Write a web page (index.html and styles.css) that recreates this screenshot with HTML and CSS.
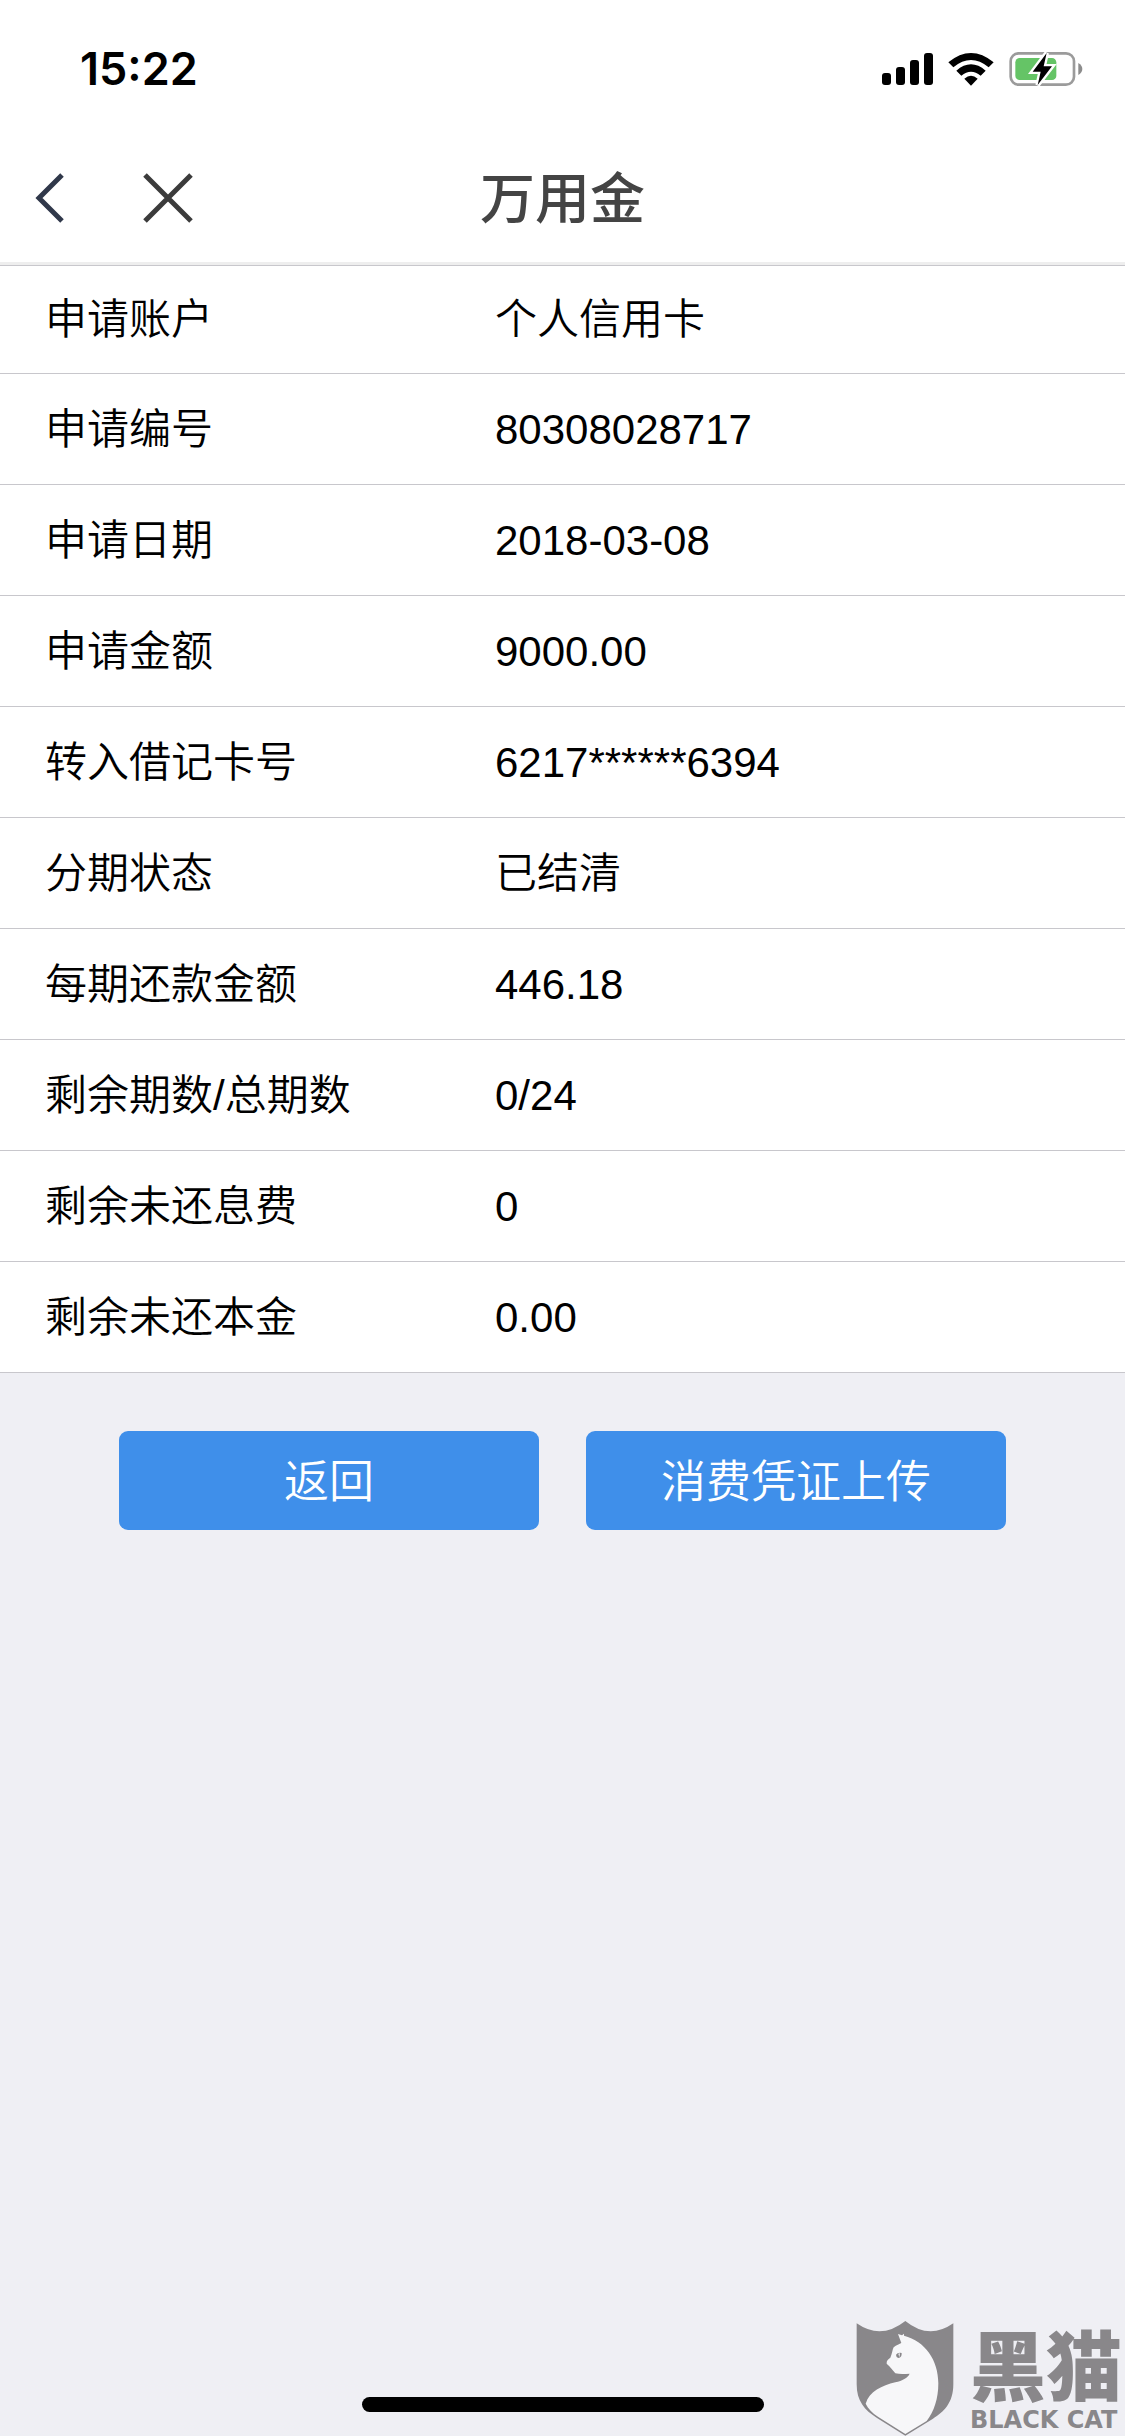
FILE: index.html
```html
<!DOCTYPE html>
<html lang="zh-CN">
<head>
<meta charset="utf-8">
<meta name="viewport" content="width=device-width, initial-scale=1">
<title>万用金</title>
<link rel="stylesheet" href="styles.css">
</head>
<body>
<div class="page">
  <div class="status-bar">
    <time class="clock">15:22</time>
    <div class="status-icons">
      <svg class="signal" viewBox="0 0 51 32" aria-hidden="true">
        <rect x="0" y="20" width="9" height="12" rx="3"/>
        <rect x="14" y="14" width="9" height="18" rx="3"/>
        <rect x="28" y="7" width="9" height="25" rx="3"/>
        <rect x="42" y="0" width="9" height="32" rx="3"/>
      </svg>
      <svg class="wifi" viewBox="0 0 138 99" aria-hidden="true">
        <path d="M1 28Q69-28 137 28L122 43Q69-1 16 43Z"/>
        <path d="M25 53Q69 15 113 53L98 68Q69 44 40 68Z"/>
        <path d="M49 77Q69 60 89 77L69 98Z"/>
      </svg>
      <svg class="battery" viewBox="0 0 220 102" aria-hidden="true">
        <rect x="4" y="4" width="190" height="94" rx="24" fill="none" stroke="#9b9b9b" stroke-width="8"/>
        <path d="M207 33Q219 40 219 51T207 69Z" fill="#8c8c8c"/>
        <rect x="18" y="18" width="123" height="66" rx="13" fill="#65c466"/>
        <path d="M112 3 70 59H94L85 99 128 43H103Z" fill="#000" stroke="#fff" stroke-width="14" paint-order="stroke"/>
      </svg>
    </div>
  </div>

  <header class="nav">
    <div class="nav-actions">
      <button class="icon-button" type="button" aria-label="返回上一页">
        <svg class="chevron" viewBox="0 0 30 50"><path d="M27 2 4 25 27 48" fill="none" stroke="#30384a" stroke-width="5"/></svg>
      </button>
      <button class="icon-button" type="button" aria-label="关闭">
        <svg class="cross" viewBox="0 0 50 50"><path d="M2 2 48 48M48 2 2 48" fill="none" stroke="#3b3b3b" stroke-width="5"/></svg>
      </button>
    </div>
    <h1 class="title">万用金</h1>
  </header>

  <main>
    <dl class="details">
      <div class="row"><dt>申请账户</dt><dd>个人信用卡</dd></div>
      <div class="row"><dt>申请编号</dt><dd>80308028717</dd></div>
      <div class="row"><dt>申请日期</dt><dd>2018-03-08</dd></div>
      <div class="row"><dt>申请金额</dt><dd>9000.00</dd></div>
      <div class="row"><dt>转入借记卡号</dt><dd>6217******6394</dd></div>
      <div class="row"><dt>分期状态</dt><dd>已结清</dd></div>
      <div class="row"><dt>每期还款金额</dt><dd>446.18</dd></div>
      <div class="row"><dt>剩余期数/总期数</dt><dd>0/24</dd></div>
      <div class="row"><dt>剩余未还息费</dt><dd>0</dd></div>
      <div class="row"><dt>剩余未还本金</dt><dd>0.00</dd></div>
    </dl>
    <div class="actions">
      <button class="button" type="button">返回</button>
      <button class="button" type="button">消费凭证上传</button>
    </div>
  </main>

  <footer class="home-area"><div class="home-indicator"></div></footer>

  <div class="brand">
    <svg class="shield" viewBox="0 0 292 345" aria-hidden="true">
      <path d="M1 7Q74 58 147 0Q218 58 291 7V190C291 246 262 273 230 293L147 344 62 291C24 267 1 240 1 190Z" fill="#89878a"/>
      <path d="M125 39 137 43 143 38V44C207 61 246 117 246 187C246 233 233 272 211 300L147 339 66 288C47 276 36 263 28 248C39 211 77 194 117 184C139 178 153 172 160 158C145 159 130 160 117 157C109 148 103 138 91 128C90 119 95 115 102 110C108 97 108 86 112 79C120 71 130 70 135 66Z" fill="#f7f7f9"/>
      <path d="M119 101Q124 94 136 96Q137 109 126 111Q119 109 119 101Z" fill="#89878a"/>
      <path d="M126 98 131 97 129 109Z" fill="#f7f7f9"/>
    </svg>
    <div class="brand-name">
      <span class="brand-zh">黑猫</span>
      <span class="brand-en">BLACK CAT</span>
    </div>
  </div>
</div>
</body>
</html>
```

FILE: styles.css
```css
* {
  box-sizing: border-box;
}

body {
  margin: 0;
  background: #efeff4;
  color: #000;
  font-family: "Liberation Sans", "Noto Sans CJK SC", sans-serif;
}

button {
  margin: 0;
  padding: 0;
  border: 0;
  font-family: inherit;
  cursor: pointer;
}

svg {
  display: block;
}

.page {
  position: relative;
  display: flex;
  flex-direction: column;
  min-height: 100vh;
}

.status-bar {
  display: flex;
  align-items: center;
  justify-content: space-between;
  height: 132px;
  padding: 6px 42px 0 80px;
  background: #fff;
}

.clock {
  font: 600 45px/56px Inter, sans-serif;
}

.status-icons {
  display: flex;
  align-items: center;
  gap: 15px;
}

.signal {
  width: 51px;
  height: 32px;
}

.wifi {
  width: 46px;
  height: 33px;
}

.battery {
  width: 74px;
  height: 34px;
}

.nav {
  display: grid;
  grid-template-columns: 1fr auto 1fr;
  align-items: center;
  height: 133px;
  padding-top: 2px;
  border-bottom: 3px solid #eee;
  background: #fff;
}

.nav-actions {
  display: flex;
  gap: 78px;
  padding-left: 35px;
}

.icon-button {
  background: none;
}

.chevron {
  width: 30px;
  height: 50px;
}

.cross {
  width: 50px;
  height: 50px;
}

.title {
  margin: 0;
  padding-top: 2px;
  color: #444;
  font-size: 55px;
  font-weight: 500;
  line-height: 80px;
}

.details {
  margin: 0;
  border-top: 1px solid #c8c7cc;
  background: #fff;
}

.row {
  display: flex;
  align-items: center;
  height: 111px;
  padding-top: 2px;
  border-bottom: 1px solid #c8c7cc;
  font-size: 42px;
  font-weight: 350;
  line-height: 60px;
}

.row:first-child {
  height: 108px;
  padding-top: 0;
}

.row dt {
  width: 44%;
  padding-left: 45px;
}

.row dd {
  margin: 0;
}

.actions {
  display: flex;
  gap: 47px;
  padding: 58px 119px;
}

.button {
  flex: 1;
  height: 99px;
  padding-top: 4px;
  border-radius: 9px;
  background: #3f8fea;
  color: #fff;
  font-size: 45px;
  font-weight: 350;
  line-height: 64px;
}

.home-area {
  display: flex;
  justify-content: center;
  margin-top: auto;
  padding-bottom: 24px;
}

.home-indicator {
  width: 402px;
  height: 15px;
  border-radius: 8px;
  background: #000;
}

.brand {
  position: absolute;
  right: 0;
  bottom: 0;
  display: flex;
  align-items: flex-end;
  gap: 16px;
  color: #89878a;
}

.shield {
  width: 98px;
  height: 115px;
}

.brand-name {
  display: flex;
  flex-direction: column;
  gap: 4px;
  width: 155px;
}

.brand-zh {
  font: 900 76px/76px "Noto Sans CJK SC", sans-serif;
}

.brand-en {
  font: 700 24px/32px "DejaVu Sans", sans-serif;
  white-space: nowrap;
}
```
